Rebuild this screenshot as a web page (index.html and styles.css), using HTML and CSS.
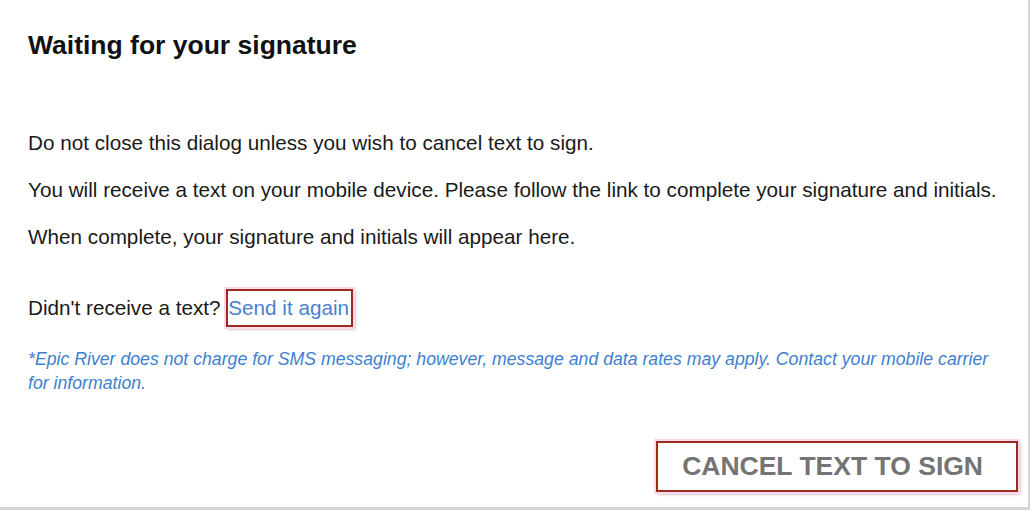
FILE: index.html
```html
<!DOCTYPE html>
<html lang="en">
<head>
  <meta charset="UTF-8" />
  <title>Text to Sign</title>
  <link rel="stylesheet" href="styles.css">
</head>
<body>
  <div class="dialog">
    <h2 class="title">Waiting for your signature</h2>

    <div class="body">
      <p>Do not close this dialog unless you wish to cancel text to sign.</p>
      <p>You will receive a text on your mobile device. Please follow the link to complete your signature and initials.</p>
      <p>When complete, your signature and initials will appear here.</p>

      <p class="resend">Didn't receive a text? <a href="#" class="resend-link">Send it again</a></p>

      <p class="note">*Epic River does not charge for SMS messaging; however, message and data rates may apply. Contact your mobile carrier for information.</p>
    </div>

    <div class="actions">
      <button class="cancel-btn">CANCEL TEXT TO SIGN</button>
    </div>
  </div>
</body>
</html>
```

FILE: styles.css
```css
html, body {
  margin: 0;
  padding: 0;
  background: #fff;
  font-family: "Liberation Sans", Arial, sans-serif;
  color: #1a1a1a;
}

.dialog {
  width: 1030px;
  height: 510px;
  box-sizing: border-box;
  border-right: 2px solid #d4d4d4;
  border-bottom: 3px solid #d4d4d4;
  padding: 30px 0 0 28px;
  display: flex;
  flex-direction: column;
}

.title {
  margin: 0;
  font-size: 26.5px;
  font-weight: bold;
  color: #111;
  line-height: 30px;
}

.body {
  margin-top: 69px;
}

.body p {
  margin: 0 0 20px;
  font-size: 20.7px;
  line-height: 27px;
}

.resend {
  padding-top: 19px;
}

.resend-link {
  color: #4a7fcf;
  text-decoration: none;
  display: inline-block;
  padding: 6px 2px 6px 0;
  border: 2px solid #9c2b1c;
  box-shadow: 0 0 0 2px #ffd6f2, 2px 2px 3px rgba(60, 20, 0, 0.4);
  line-height: 22px;
}

.body .note {
  margin-top: 2px;
  font-size: 17.7px;
  font-style: italic;
  line-height: 24px;
  color: #3f7fd0;
  padding-right: 30px;
}

.actions {
  display: flex;
  justify-content: flex-end;
  margin-top: auto;
  padding: 0 10px 15px 0;
}

.cancel-btn {
  font-family: "Liberation Sans", Arial, sans-serif;
  font-size: 26.5px;
  font-weight: bold;
  color: #747474;
  background: #fff;
  border: 2px solid #9c2b1c;
  box-shadow: 0 0 0 2px #ffd6f2, 2px 2px 3px rgba(60, 20, 0, 0.4);
  padding: 0 33px 0 24px;
  height: 51px;
  cursor: pointer;
}
```
